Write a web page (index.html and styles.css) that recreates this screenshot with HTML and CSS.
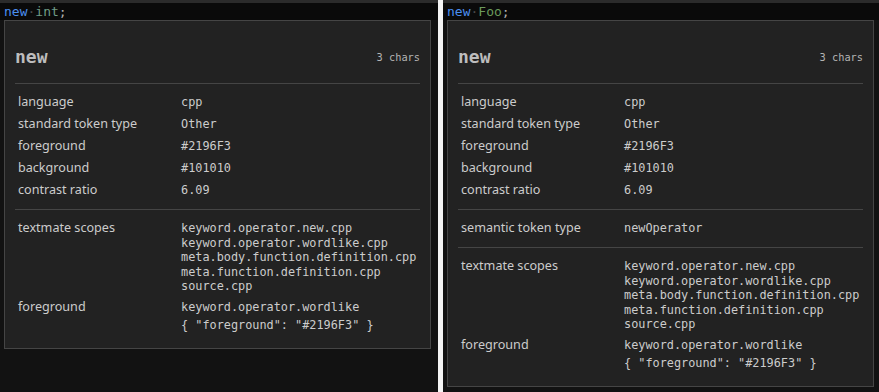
FILE: index.html
```html
<!DOCTYPE html>
<html>
<head>
  <meta charset="utf-8">
  <title>Inspect Editor Tokens</title>
  <link rel="stylesheet" href="styles.css">
</head>
<body>
<div class="shots">

  <div class="panel">
    <div class="topline"></div>
    <div class="codeline"><span class="kw">new</span><span class="ws">·</span><span class="type">int</span><span class="punc">;</span></div>
    <div class="editor">
      <div class="hover">
        <div class="hover-head">
          <span class="token">new</span>
          <span class="count">3 chars</span>
        </div>
        <div class="section">
          <div class="row"><span class="label">language</span><span class="value">cpp</span></div>
          <div class="row"><span class="label">standard token type</span><span class="value">Other</span></div>
          <div class="row"><span class="label">foreground</span><span class="value">#2196F3</span></div>
          <div class="row"><span class="label">background</span><span class="value">#101010</span></div>
          <div class="row"><span class="label">contrast ratio</span><span class="value">6.09</span></div>
        </div>
        <div class="section last">
          <div class="row multi">
            <span class="label">textmate scopes</span>
            <span class="value lines">keyword.operator.new.cpp<br>keyword.operator.wordlike.cpp<br>meta.body.function.definition.cpp<br>meta.function.definition.cpp<br>source.cpp</span>
          </div>
          <div class="row multi">
            <span class="label">foreground</span>
            <span class="value lines">keyword.operator.wordlike<span class="json">{ "foreground": "#2196F3" }</span></span>
          </div>
        </div>
      </div>
    </div>
  </div>

  <div class="divider"></div>

  <div class="panel">
    <div class="topline"></div>
    <div class="codeline"><span class="kw">new</span><span class="ws">·</span><span class="cls">Foo</span><span class="punc">;</span></div>
    <div class="editor">
      <div class="hover">
        <div class="hover-head">
          <span class="token">new</span>
          <span class="count">3 chars</span>
        </div>
        <div class="section">
          <div class="row"><span class="label">language</span><span class="value">cpp</span></div>
          <div class="row"><span class="label">standard token type</span><span class="value">Other</span></div>
          <div class="row"><span class="label">foreground</span><span class="value">#2196F3</span></div>
          <div class="row"><span class="label">background</span><span class="value">#101010</span></div>
          <div class="row"><span class="label">contrast ratio</span><span class="value">6.09</span></div>
        </div>
        <div class="section">
          <div class="row"><span class="label">semantic token type</span><span class="value">newOperator</span></div>
        </div>
        <div class="section last">
          <div class="row multi">
            <span class="label">textmate scopes</span>
            <span class="value lines">keyword.operator.new.cpp<br>keyword.operator.wordlike.cpp<br>meta.body.function.definition.cpp<br>meta.function.definition.cpp<br>source.cpp</span>
          </div>
          <div class="row multi">
            <span class="label">foreground</span>
            <span class="value lines">keyword.operator.wordlike<span class="json">{ "foreground": "#2196F3" }</span></span>
          </div>
        </div>
      </div>
    </div>
  </div>

</div>
</body>
</html>
```

FILE: styles.css
```css
body {
  margin: 0;
  padding: 0;
  background-color: #121212;
  font-family: "Noto Sans", Arial, sans-serif;
  color: #cccccc;
}
.shots {
  display: flex;
  height: 392px;
  overflow: hidden;
}
.panel {
  background-color: #121212;
  display: flex;
  flex-direction: column;
}
.panel:first-child {
  width: 438px;
}
.panel:last-child {
  flex: 1;
}
.divider {
  width: 5px;
  background-color: #f4f4f4;
}
.topline {
  height: 3px;
  background-color: #2b2b2b;
}
.codeline {
  height: 17px;
  line-height: 17px;
  background-color: #0a0a0a;
  padding-left: 4px;
  font-family: "DejaVu Sans Mono", monospace;
  font-size: 13px;
  white-space: pre;
}
.kw {
  color: #4a8ff0;
}
.ws {
  color: #4a4a4a;
}
.type {
  color: #6f9c86;
}
.cls {
  color: #6a9a5c;
}
.punc {
  color: #b0b0b0;
}
.editor {
  flex: 1;
  padding-left: 4px;
}
.hover {
  width: 405px;
  padding: 0 10px;
  background-color: #222222;
  border: 1px solid #454545;
}
.hover-head {
  display: flex;
  justify-content: space-between;
  align-items: center;
  padding-top: 24px;
  padding-bottom: 14px;
  border-bottom: 1px solid #454545;
}
.token {
  font-family: "DejaVu Sans Mono", monospace;
  font-weight: bold;
  font-size: 18px;
  line-height: 24px;
  color: #bdbdbd;
}
.count {
  font-family: "DejaVu Sans Mono", monospace;
  font-size: 10.3px;
  color: #b4b4b4;
}
.section {
  padding: 7px 0 8px 3px;
  border-bottom: 1px solid #454545;
}
.section.last {
  border-bottom: none;
  padding-bottom: 14px;
}
.row {
  display: grid;
  grid-template-columns: 163px 1fr;
  align-items: center;
  height: 22px;
  font-size: 12.6px;
}
.row.multi {
  height: auto;
  align-items: start;
}
.label {
  line-height: 22px;
  color: #cccccc;
}
.value {
  font-family: "DejaVu Sans Mono", monospace;
  font-size: 11.85px;
  color: #cccccc;
}
.value.lines {
  line-height: 14.5px;
  padding: 4px 0 2px;
}
.json {
  display: block;
  margin-top: 3.5px;
}
```
